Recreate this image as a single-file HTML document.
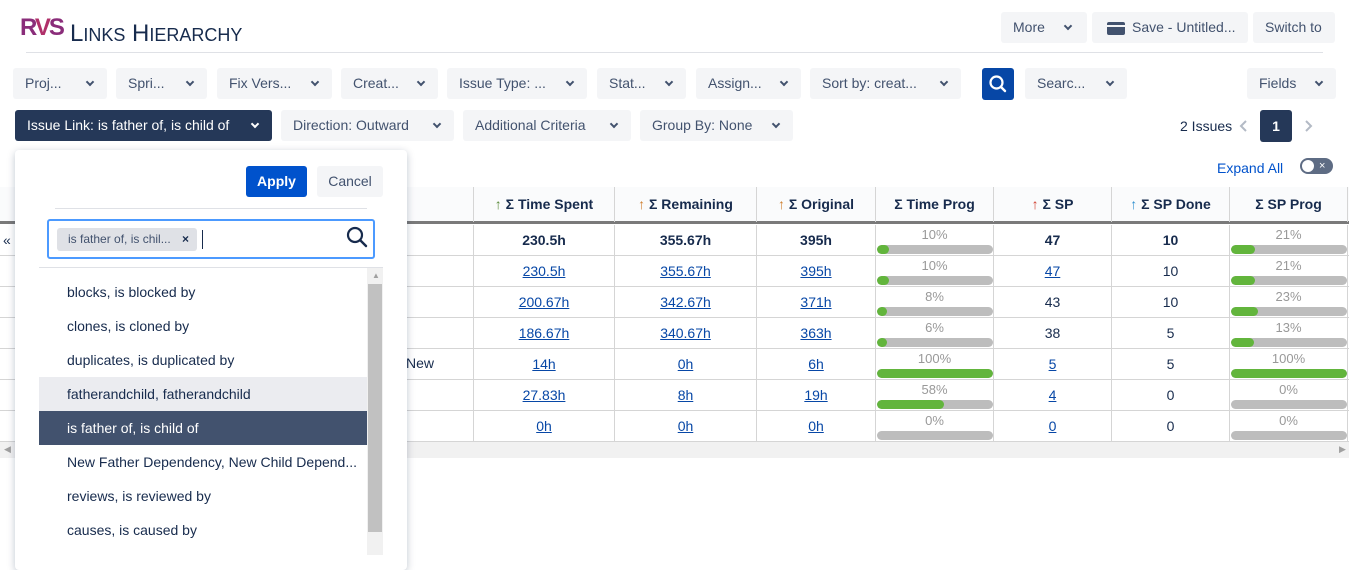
<!DOCTYPE html>
<html><head><meta charset="utf-8"><style>
*{box-sizing:border-box;margin:0;padding:0}
body{width:1349px;height:555px;overflow:hidden;background:#fff;font-family:"Liberation Sans",sans-serif;color:#172b4d;position:relative;font-size:14px}
.a{position:absolute}
.btn{position:absolute;background:#f4f5f7;border-radius:3px;height:31px;line-height:31px;font-size:14px;color:#42526e;padding-left:12px;white-space:nowrap}
.btn .cv{position:absolute;right:14px;top:11px;width:6px;height:6px;border-right:2px solid currentColor;border-bottom:2px solid currentColor;transform:rotate(45deg)}
.th{position:absolute;top:187px;height:35px;line-height:35px;text-align:center;font-weight:bold;font-size:14px;color:#172b4d;border-left:1px solid #d5d5d5}
.td{position:absolute;height:31px;text-align:center;font-size:14px;line-height:31px;border-left:1px solid #d5d5d5}
.lk{color:#0747a6;text-decoration:underline}
.pb{position:absolute;left:1px;right:0;top:20px;height:9px;border-radius:5px;background:#bdbdbd;overflow:hidden}
.pb i{display:block;height:100%;background:#62b53c;border-radius:5px}
.pt{position:absolute;left:0;right:0;top:0;color:#999;font-size:13px;line-height:20px}
.it{position:absolute;left:39px;width:328px;height:34px;line-height:34px;padding-left:28px;font-size:14px;color:#172b4d}
</style></head><body>
<div class="a" style="left:20px;top:14px;font-size:24px;font-weight:bold;letter-spacing:-2px;color:#8a2d7a">R<span style="color:#b0306a">V</span>S</div>
<div class="a" style="left:70px;top:20px;font-size:24px;line-height:28px;color:#172b4d">L<span style="font-size:18px">INKS</span> H<span style="font-size:18px">IERARCHY</span></div>
<div class="a" style="left:26px;top:52px;width:1297px;height:1px;background:#dfe1e6"></div>
<div class="btn" style="left:1001px;top:12px;width:86px">More<span class="cv" style="right:16px"></span></div>
<div class="btn" style="left:1092px;top:12px;width:156px;padding-left:40px">Save - Untitled...<span class="a" style="left:15px;top:10px;width:18px;height:13px;background:#42526e;border-radius:2px"></span><span class="a" style="left:15px;top:13px;width:18px;height:2px;background:#f4f5f7"></span></div>
<div class="btn" style="left:1253px;top:12px;width:82px">Switch to</div>
<div class="btn" style="left:13px;top:68px;width:94px">Proj...<span class="cv"></span></div>
<div class="btn" style="left:116px;top:68px;width:91px">Spri...<span class="cv"></span></div>
<div class="btn" style="left:217px;top:68px;width:115px">Fix Vers...<span class="cv"></span></div>
<div class="btn" style="left:341px;top:68px;width:97px">Creat...<span class="cv"></span></div>
<div class="btn" style="left:447px;top:68px;width:140px">Issue Type: ...<span class="cv"></span></div>
<div class="btn" style="left:597px;top:68px;width:89px">Stat...<span class="cv"></span></div>
<div class="btn" style="left:696px;top:68px;width:105px">Assign...<span class="cv"></span></div>
<div class="btn" style="left:810px;top:68px;width:151px">Sort by: creat...<span class="cv"></span></div>
<div class="a" style="left:982px;top:68px;width:32px;height:32px;background:#0747a6;border-radius:3px"><svg width="32" height="32"><circle cx="14.5" cy="14.5" r="6" fill="none" stroke="#fff" stroke-width="2.2"/><line x1="19" y1="19" x2="23" y2="23" stroke="#fff" stroke-width="2.4" stroke-linecap="round"/></svg></div>
<div class="btn" style="left:1025px;top:68px;width:102px">Searc...<span class="cv"></span></div>
<div class="btn" style="left:1247px;top:68px;width:89px">Fields<span class="cv"></span></div>
<div class="btn" style="left:15px;top:110px;width:257px;background:#253858;color:#fff">Issue Link: is father of, is child of<span class="cv"></span></div>
<div class="btn" style="left:281px;top:110px;width:173px">Direction: Outward<span class="cv"></span></div>
<div class="btn" style="left:463px;top:110px;width:168px">Additional Criteria<span class="cv"></span></div>
<div class="btn" style="left:640px;top:110px;width:153px">Group By: None<span class="cv"></span></div>
<div class="a" style="left:1180px;top:118px;font-size:14px;color:#172b4d">2 Issues</div>
<svg class="a" style="left:1238px;top:118px" width="12" height="16"><path d="M8 3 L3 8 L8 13" fill="none" stroke="#b3bac5" stroke-width="2"/></svg>
<div class="a" style="left:1260px;top:110px;width:32px;height:32px;background:#253858;border-radius:3px;color:#fff;font-weight:bold;text-align:center;line-height:32px">1</div>
<svg class="a" style="left:1302px;top:118px" width="12" height="16"><path d="M4 3 L9 8 L4 13" fill="none" stroke="#b3bac5" stroke-width="2"/></svg>
<div class="a" style="left:1217px;top:160px;color:#0052cc;font-size:14px">Expand All</div>
<div class="a" style="left:1300px;top:158px;width:33px;height:16px;border-radius:8px;background:#5e6c84"><span class="a" style="left:2px;top:2px;width:12px;height:12px;border-radius:6px;background:#fff"></span><span class="a" style="left:19px;top:0;color:#fff;font-size:11px;line-height:16px">×</span></div>
<div class="a" style="left:0;top:187px;width:1349px;height:35px;background:#fafbfc"></div>
<div class="a" style="left:0;top:221px;width:1349px;height:3px;background:#7a7a7a"></div>
<div class="th" style="left:473px;width:141px"><span style="color:#5a8a3a;font-weight:normal">↑</span> Σ Time Spent</div>
<div class="th" style="left:614px;width:142px"><span style="color:#d08030;font-weight:normal">↑</span> Σ Remaining</div>
<div class="th" style="left:756px;width:119px"><span style="color:#d08030;font-weight:normal">↑</span> Σ Original</div>
<div class="th" style="left:875px;width:118px">Σ Time Prog</div>
<div class="th" style="left:993px;width:118px"><span style="color:#d04030;font-weight:normal">↑</span> Σ SP</div>
<div class="th" style="left:1111px;width:118px"><span style="color:#3090d0;font-weight:normal">↑</span> Σ SP Done</div>
<div class="th" style="left:1229px;width:119px;border-right:1px solid #d5d5d5">Σ SP Prog</div>
<div class="a" style="left:0;top:255px;width:1349px;height:1px;background:#d5d5d5"></div>
<div class="a" style="left:0;top:286px;width:1349px;height:1px;background:#d5d5d5"></div>
<div class="a" style="left:0;top:317px;width:1349px;height:1px;background:#d5d5d5"></div>
<div class="a" style="left:0;top:348px;width:1349px;height:1px;background:#d5d5d5"></div>
<div class="a" style="left:0;top:379px;width:1349px;height:1px;background:#d5d5d5"></div>
<div class="a" style="left:0;top:410px;width:1349px;height:1px;background:#d5d5d5"></div>
<div class="a" style="left:0;top:441px;width:1349px;height:1px;background:#d5d5d5"></div>
<div class="a" style="left:0;top:442px;width:1349px;height:16px;background:#f1f1f1"></div>
<div class="a" style="left:4px;top:444px;color:#a0a0a0;font-size:9px">◀</div>
<div class="a" style="left:1339px;top:444px;color:#a0a0a0;font-size:9px">▶</div>
<div class="a" style="left:3px;top:232px;font-size:14px">«</div>
<div class="a" style="left:406px;top:355px;font-size:14px">New</div>
<div id="rows"></div>
<script>
var R=[[1,'230.5h','355.67h','395h',10,'47','10',21],[0,'230.5h','355.67h','395h',10,'47','10',21],[0,'200.67h','342.67h','371h',8,'43','10',23],[0,'186.67h','340.67h','363h',6,'38','5',13],[0,'14h','0h','6h',100,'5','5',100],[0,'27.83h','8h','19h',58,'4','0',0],[0,'0h','0h','0h',0,'0','0',0]];
var C=[[473,141],[614,142],[756,119],[875,118],[993,118],[1111,118],[1229,119]];
var spl=[0,1,0,0,1,1,1];var h='';
R.forEach(function(r,i){var y=225+i*31;
function cell(k,html){h+='<div class="td" style="left:'+C[k][0]+'px;top:'+y+'px;width:'+C[k][1]+'px'+(k==6?';border-right:1px solid #d5d5d5':'')+'">'+html+'</div>';}
function t(v,l){return r[0]?'<b>'+v+'</b>':(l?'<span class="lk">'+v+'</span>':v);}
cell(0,t(r[1],1));cell(1,t(r[2],1));cell(2,t(r[3],1));
cell(3,'<div class="pt">'+r[4]+'%</div><div class="pb"><i style="width:'+(r[4]?Math.max(r[4],9):0)+'%"></i></div>');
cell(4,t(r[5],spl[i]));cell(5,t(r[6],0));
cell(6,'<div class="pt">'+r[7]+'%</div><div class="pb"><i style="width:'+(r[7]?Math.max(r[7],20):0)+'%"></i></div>');
});
document.getElementById('rows').innerHTML=h;
</script>
<div class="a" style="left:15px;top:150px;width:392px;height:420px;background:#fff;border-radius:4px;box-shadow:0 2px 8px rgba(9,30,66,.25)"></div>
<div class="a" style="left:246px;top:166px;width:61px;height:31px;background:#0052cc;border-radius:3px;color:#fff;font-weight:bold;text-align:center;line-height:31px">Apply</div>
<div class="a" style="left:317px;top:166px;width:66px;height:31px;background:#f4f5f7;border-radius:3px;color:#42526e;text-align:center;line-height:31px">Cancel</div>
<div class="a" style="left:55px;top:208px;width:312px;height:1px;background:#dfe1e6"></div>
<div class="a" style="left:47px;top:219px;width:328px;height:40px;border:2px solid #4c9aff;border-radius:3px"></div>
<div class="a" style="left:57px;top:228px;width:140px;height:23px;background:#dfe1e6;border-radius:3px;font-size:12px;line-height:23px;padding-left:11px;color:#42526e">is father of, is chil...<span class="a" style="left:125px;top:0;font-weight:bold;color:#172b4d;font-size:12px">×</span></div>
<div class="a" style="left:202px;top:230px;width:1px;height:19px;background:#172b4d"></div>
<svg class="a" style="left:345px;top:225px" width="24" height="24"><circle cx="10" cy="10" r="7" fill="none" stroke="#172b4d" stroke-width="2.2"/><line x1="15" y1="15" x2="21" y2="21" stroke="#172b4d" stroke-width="2.4" stroke-linecap="round"/></svg>
<div class="a" style="left:39px;top:267px;width:344px;height:1px;background:#dfe1e6"></div>
<div class="a" style="left:367px;top:268px;width:16px;height:287px;background:#f1f1f1"></div>
<div class="a" style="left:372px;top:271px;color:#a0a0a0;font-size:8px">▲</div>
<div class="a" style="left:368px;top:284px;width:14px;height:248px;background:#c1c1c1"></div>
<div class="it" style="top:275px">blocks, is blocked by</div>
<div class="it" style="top:309px">clones, is cloned by</div>
<div class="it" style="top:343px">duplicates, is duplicated by</div>
<div class="it" style="top:377px;background:#ebecf0">fatherandchild, fatherandchild</div>
<div class="it" style="top:411px;background:#42526e;color:#fff">is father of, is child of</div>
<div class="it" style="top:445px">New Father Dependency, New Child Depend...</div>
<div class="it" style="top:479px">reviews, is reviewed by</div>
<div class="it" style="top:513px">causes, is caused by</div>
</body></html>
